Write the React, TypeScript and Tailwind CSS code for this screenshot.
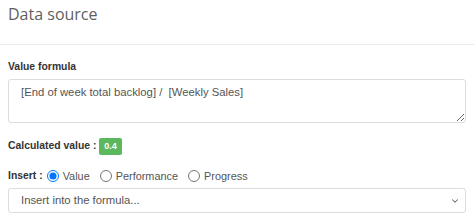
import { useState } from "react";
import { ChevronDown } from "lucide-react";

const BODY = { fontFamily: '"Liberation Sans", Arial, sans-serif' };

function App() {
  const [mode, setMode] = useState("value");

  return (
    <div className="w-[474px] h-[224px] bg-white text-[#555] overflow-hidden" style={BODY}>
      {/* header */}
      <div className="h-[45px] border-b border-[#e9e9e9] pl-2 pt-[2px]">
        <h2
          className="text-[16px] leading-[24px] text-[#5f5f5f]"
          style={{ fontFamily: '"Open Sans", sans-serif' }}
        >
          Data source
        </h2>
      </div>

      <div className="px-2 pt-[15px]">
        <label className="block text-[10.4px] font-bold text-[#333] leading-[14px] mb-[5px]">
          Value formula
        </label>
        <textarea
          className="block w-full h-[44px] border border-[#dcdcdc] rounded-[3px] px-[12px] py-[4px] text-[11.3px] leading-[16px] text-[#555] outline-none"
          defaultValue="[End of week total backlog] /  [Weekly Sales]"
        />

        <div className="flex items-center gap-[3px] mt-[15px] h-[16px]">
          <span className="text-[10.4px] font-bold text-[#333]">Calculated value :</span>
          <span className="bg-[#5cb85c] text-white text-[9px] font-bold leading-none px-[5px] py-[4px] rounded-[2px]">
            0.4
          </span>
        </div>

        <div className="flex items-center mt-[14px] h-[16px] text-[10.9px]">
          <span className="text-[10.4px] font-bold text-[#333] mr-[1px]">Insert :</span>
          {[
            ["value", "Value"],
            ["performance", "Performance"],
            ["progress", "Progress"],
          ].map(([k, label]) => (
            <label key={k} className="flex items-center mr-[7px]">
              <input
                type="radio"
                name="insert"
                checked={mode === k}
                onChange={() => setMode(k)}
                className="w-[12px] h-[12px] m-0 mx-[3px]"
              />
              <span className="ml-[1px]">{label}</span>
            </label>
          ))}
        </div>

        <div className="relative mt-[4px]">
          <select
            className="block w-full h-[25px] appearance-none border border-[#dcdcdc] rounded-[3px] pl-[12px] pr-6 text-[11.3px] text-[#555] outline-none bg-white"
            defaultValue=""
          >
            <option value="">Insert into the formula...</option>
          </select>
          <ChevronDown
            className="absolute right-[6px] top-[8px] w-[10px] h-[10px] text-[#666] pointer-events-none"
            strokeWidth={2.5}
          />
        </div>
      </div>
    </div>
  );
}

export default App;
